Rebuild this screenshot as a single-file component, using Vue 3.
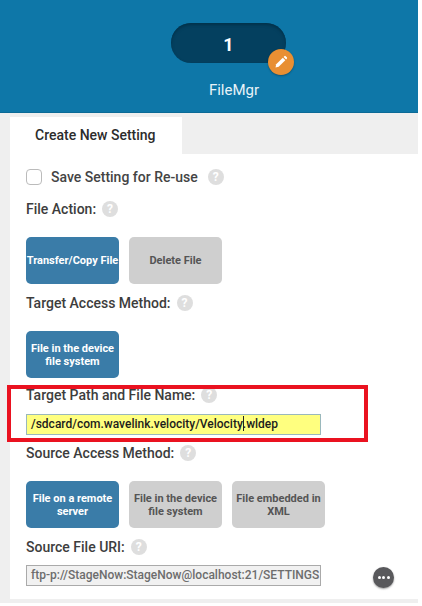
<script setup>
const groups = {
  action: [
    { text: 'Transfer/Copy File', on: true, tight: true },
    { text: 'Delete File' },
  ],
  target: [{ text: 'File in the device file system', on: true }],
  source: [
    { text: 'File on a remote server', on: true },
    { text: 'File in the device file system' },
    { text: 'File embedded in XML' },
  ],
}
</script>

<template>
  <div class="page">
    <header class="hero">
      <div class="pill">
        <span class="count">1</span>
        <span class="edit">
          <svg width="14" height="14" viewBox="0 0 14 14">
            <path d="M1.5 12.5l.7-3.2 6.6-6.6 2.5 2.5-6.6 6.6z" fill="#fff" />
            <path d="M9.6 1.9l.7-.7a1 1 0 0 1 1.4 0l1.1 1.1a1 1 0 0 1 0 1.4l-.7.7z" fill="#fff" />
          </svg>
        </span>
      </div>
      <div class="name">FileMgr</div>
    </header>

    <div class="tabs"><div class="tab">Create New Setting</div></div>

    <main class="panel">
      <div class="save">
        <span class="check"></span>
        <span class="save-text">Save Setting for Re-use</span>
        <span class="help">?</span>
      </div>

      <div class="label label-first">File Action: <span class="help">?</span></div>
      <div class="buttons">
        <button v-for="b in groups.action" :key="b.text" class="choice" :class="{ on: b.on, tight: b.tight }">{{ b.text }}</button>
      </div>

      <div class="label">Target Access Method: <span class="help">?</span></div>
      <div class="buttons">
        <button v-for="b in groups.target" :key="b.text" class="choice" :class="{ on: b.on }">{{ b.text }}</button>
      </div>

      <div class="label label-path">Target Path and File Name: <span class="help">?</span></div>
      <div class="field yellow">/sdcard/com.wavelink.velocity/Velocity<i class="caret"></i>.wldep</div>

      <div class="label label-source">Source Access Method: <span class="help">?</span></div>
      <div class="buttons">
        <button v-for="b in groups.source" :key="b.text" class="choice" :class="{ on: b.on }">{{ b.text }}</button>
      </div>

      <div class="label label-uri">Source File URI: <span class="help">?</span></div>
      <div class="uri-row">
        <div class="field grey">ftp-p://StageNow:StageNow@localhost:21/SETTINGS</div>
        <span class="more"><i></i><i></i><i></i></span>
      </div>

      <div class="highlight"></div>
    </main>
  </div>
</template>

<style>
html, body { margin: 0; background: #fff; }
</style>

<style scoped>
.page {
  width: 418px;
  height: 603px;
  background: #efefef;
  font-family: Roboto, "Liberation Sans", sans-serif;
  overflow: hidden;
}
.hero {
  height: 112px;
  background: #0e77a8;
  border-bottom: 1px solid #0b6a96;
  display: flex;
  flex-direction: column;
  align-items: center;
  padding-left: 50px;
}
.pill {
  position: relative;
  width: 115px;
  height: 40px;
  margin: 23px 0 0 -11px;
  border-radius: 20px;
  background: #04405f;
  box-shadow: inset 0 2px 3px #02324b;
  display: flex;
  align-items: center;
  justify-content: center;
}
.count {
  color: #fff;
  font-size: 18px;
  font-weight: 700;
  padding-top: 3px;
}
.edit {
  position: absolute;
  right: -8px;
  bottom: -12px;
  width: 26px;
  height: 26px;
  border-radius: 50%;
  background: #e88f33;
  box-shadow: 0 1px 2px rgba(0, 0, 0, .3);
  display: flex;
  align-items: center;
  justify-content: center;
}
.name {
  margin-top: 18px;
  color: #e8f3f8;
  font-size: 15px;
  line-height: 18px;
}
.tabs {
  height: 41px;
  padding: 4px 0 0 10px;
  box-sizing: border-box;
}
.tab {
  width: 172px;
  height: 37px;
  background: #fff;
  color: #2c2c2c;
  font-size: 14px;
  font-weight: 500;
  line-height: 37px;
  padding-left: 25px;
  box-sizing: border-box;
  white-space: nowrap;
}
.panel {
  position: relative;
  margin-left: 10px;
  height: 445px;
  background: #fff;
  padding: 15px 0 0 16px;
  box-sizing: border-box;
}
.save {
  display: flex;
  align-items: center;
  height: 16px;
}
.check {
  width: 16px;
  height: 16px;
  box-sizing: border-box;
  border: 1px solid #bbb;
  border-radius: 4px;
  background: #fff;
}
.save-text {
  margin: 0 8px 0 9px;
  color: #444;
  font-size: 14px;
  font-weight: 500;
  white-space: nowrap;
}
.help {
  display: inline-flex;
  align-items: center;
  justify-content: center;
  width: 16px;
  height: 16px;
  border-radius: 50%;
  background: #dedede;
  color: #fff;
  font-size: 12px;
  font-weight: 700;
  margin-left: 2px;
  flex: none;
}
.label {
  height: 20px;
  margin-top: 9px;
  display: flex;
  align-items: center;
  gap: 4px;
  color: #3d3d3d;
  font-size: 14px;
  font-weight: 500;
  white-space: nowrap;
}
.label-first { margin-top: 14px; }
.label-path { margin-top: 7px; }
.label-source { margin-top: 8px; }
.label-uri { margin-top: 9px; }
.buttons {
  display: flex;
  gap: 10px;
  margin-top: 18px;
}
.choice {
  width: 93px;
  height: 47px;
  padding: 0 4px;
  box-sizing: border-box;
  border: 0;
  border-radius: 5px;
  background: #cfcfcf;
  color: #555;
  font-family: inherit;
  font-size: 11px;
  font-weight: 700;
  line-height: 13px;
  text-align: center;
}
.choice.on {
  background: #3a7ca8;
  color: #fff;
}
.choice.tight {
  padding: 0;
  white-space: nowrap;
}
.field {
  width: 295px;
  height: 21px;
  margin-top: 9px;
  box-sizing: border-box;
  padding-left: 4px;
  font-size: 12px;
  line-height: 19px;
  white-space: nowrap;
  overflow: hidden;
}
.yellow {
  background: #ffff7f;
  border: 1px solid #9ab8bc;
  color: #1c1c1c;
  font-weight: 500;
}
.caret {
  display: inline-block;
  width: 1px;
  height: 15px;
  background: #222;
  vertical-align: -3px;
  margin-right: -1px;
}
.uri-row {
  display: flex;
  align-items: flex-start;
}
.grey {
  margin-top: 8px;
  background: #f1f1f1;
  border: 1px solid #aaa;
  color: #6d6d6d;
  font-weight: 500;
}
.more {
  display: flex;
  align-items: center;
  justify-content: center;
  gap: 1.5px;
  width: 21px;
  height: 21px;
  margin: 10px 0 0 52px;
  border-radius: 50%;
  background: #59595c;
  box-shadow: 0 1px 2px rgba(0, 0, 0, .4);
  flex: none;
}
.more i {
  width: 3px;
  height: 3px;
  border-radius: 50%;
  background: #fff;
}
.highlight {
  position: absolute;
  left: -3px;
  top: 231px;
  width: 361px;
  height: 57px;
  box-sizing: border-box;
  border: 4px solid #ea1220;
  pointer-events: none;
}
</style>
